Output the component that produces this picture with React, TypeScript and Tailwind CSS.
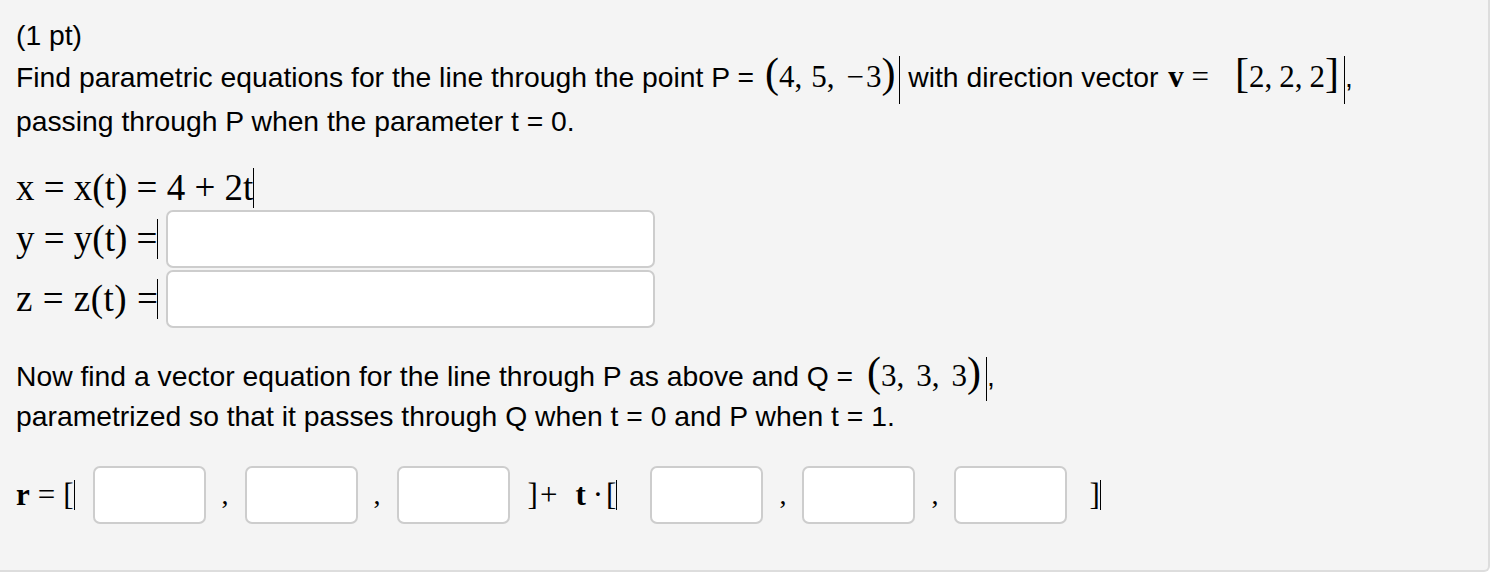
import { FC, ReactNode } from "react";

const serif = "font-['Liberation_Serif','Times_New_Roman',serif]";

const Caret: FC<{ h?: string }> = ({ h = "h-[48px]" }) => (
  <span className={`inline-block w-px ${h} bg-black align-middle`} />
);

const Box: FC<{ wide?: boolean }> = ({ wide }) => (
  <input
    type="text"
    className={`${wide ? "w-[489px]" : "w-[113px]"} h-[58px] shrink-0 rounded-[7px] border-2 border-[#cdcdcd] bg-white outline-none`}
  />
);

const Comma = () => <span className={`${serif} text-[28px] mx-[16px] leading-none`}>,</span>;

// inline math: stretched delimiters around a list
const Tuple: FC<{ open: string; close: string; children: ReactNode }> = ({ open, close, children }) => (
  <span className={`${serif} text-[31px] leading-[0]`}>
    <span className="text-[42px]">{open}</span>
    {children}
    <span className="text-[42px]">{close}</span>
  </span>
);

const App: FC = () => {
  return (
    <div className="h-[576px] w-[1494px] bg-white">
      <div className="h-[572px] w-[1490px] rounded-br-[6px] border-r-2 border-b-2 border-[#dddddd] bg-[#f4f4f4] pl-4 pt-[15px] font-['Liberation_Sans',Arial,sans-serif] text-[28.3px] text-black">
        <p className="h-[40px] leading-[40px]">(1 pt)</p>

        <p className="h-[44px] leading-[44px] whitespace-nowrap">
          Find parametric equations for the line through the point P ={" "}
          <span className="ml-[3px]">
            <Tuple open="(" close=")">
              4,<span className="ml-[9px]">5,</span>
              <span className="ml-[12px]">−</span>
              <span className="ml-[2px]">3</span>
            </Tuple>
          </span>
          <span className="ml-[4px]">
            <Caret />
          </span>{" "}
          with direction vector <b className={`${serif} ml-[2px] text-[31px] leading-[0]`}>v</b>{" "}
          <span className={`${serif} text-[31px] leading-[0] mr-[26px]`}>=</span>
          <Tuple open="[" close="]">
            2,<span className="ml-[7px]">2,</span>
            <span className="ml-[7px]">2</span>
          </Tuple>
          <span className="ml-[5px]">
            <Caret />
          </span>
          ,
        </p>
        <p className="h-[44px] leading-[44px]">passing through P when the parameter t = 0.</p>

        <div className={`${serif} mt-[24px] text-[37px] whitespace-nowrap`}>
          <div className="flex h-[42px] items-center">
            <span>x = x(t) = 4 + 2t</span>
            <Caret h="h-[40px]" />
          </div>
          <div className="flex h-[60px] items-center">
            <span className="w-[141px] shrink-0">y = y(t) =</span>
            <Caret h="h-[40px]" />
            <span className="ml-2 flex">
              <Box wide />
            </span>
          </div>
          <div className="flex h-[60px] items-center">
            <span className="w-[141px] shrink-0 tracking-[0.5px]">z = z(t) =</span>
            <Caret h="h-[40px]" />
            <span className="ml-2 flex">
              <Box wide />
            </span>
          </div>
        </div>

        <p className="mt-[27px] h-[40px] leading-[40px] whitespace-nowrap">
          Now find a vector equation for the line through P as above and Q ={" "}
          <span className="ml-[6px]">
            <Tuple open="(" close=")">
              3,<span className="ml-[12px]">3,</span>
              <span className="ml-[12px]">3</span>
            </Tuple>
          </span>
          <span className="ml-[5px]">
            <Caret h="h-[44px]" />
          </span>
          ,
        </p>
        <p className="h-[40px] leading-[40px]">parametrized so that it passes through Q when t = 0 and P when t = 1.</p>

        <div className={`${serif} mt-[29px] flex h-[60px] items-center text-[31px]`}>
          <b>r</b>
          <span className="ml-2">=</span>
          <span className="ml-2">[</span>
          <Caret h="h-[30px]" />
          <span className="ml-[18px] flex items-center">
            <Box />
            <Comma />
            <Box />
            <Comma />
            <Box />
          </span>
          <span className="ml-[18px]">]</span>
          <span className="ml-[2px]">+</span>
          <span className="ml-[18px] font-bold">t</span>
          <span className="ml-[7px]">·</span>
          <span className="ml-[3px]">[</span>
          <Caret h="h-[30px]" />
          <span className="ml-[33px] flex items-center">
            <Box />
            <Comma />
            <Box />
            <Comma />
            <Box />
          </span>
          <span className="ml-[22px]">]</span>
          <Caret h="h-[30px]" />
        </div>
      </div>
    </div>
  );
};

export default App;
